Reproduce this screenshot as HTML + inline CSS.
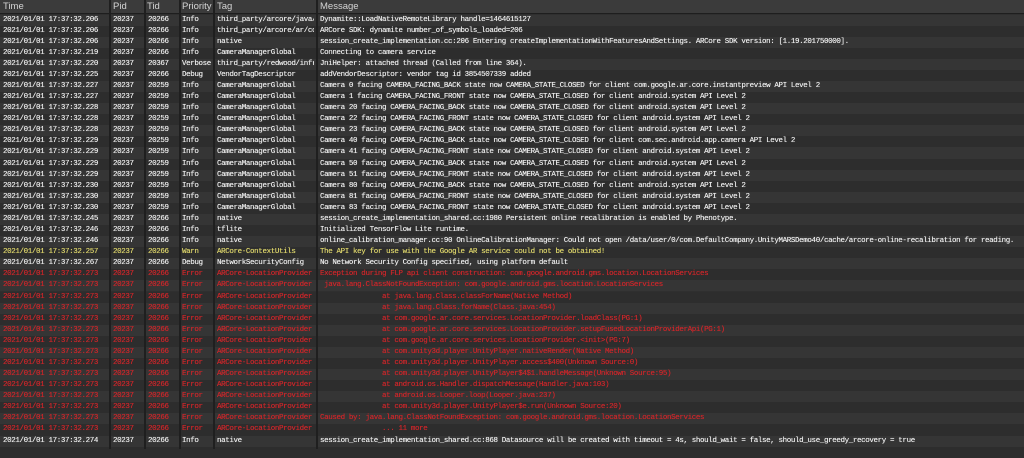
<!DOCTYPE html>
<html><head><meta charset="utf-8"><style>
html,body{margin:0;padding:0;background:#2f2f2f;width:1024px;height:449px;overflow:hidden}
.h{position:absolute;left:0;top:0;width:1024px;height:13px;background:#3b3b3b;border-bottom:1px solid #1e1e1e;font:9.5px "Liberation Sans",sans-serif;color:#d4d4d4}
.h span{position:absolute;top:1px}
.r{position:absolute;left:0;width:1024px;height:11.08px;font:7.5px/11px "Liberation Mono",monospace;letter-spacing:-0.37px;color:#ececec;white-space:pre;overflow:hidden;text-shadow:0 0 0.4px currentColor}
.r:nth-child(odd){background:#353535}
.r:nth-child(even){background:#2d2d2d}
.r span{position:absolute;top:0}
.w{color:#dcd46a}.e{color:#cc262a}
.d{position:absolute;top:0;width:2px;height:449px;background:#1f1f1f}
</style></head><body>
<div id="rows"></div>
<div class="h"><span style="left:3px">Time</span><span style="left:113px">Pid</span><span style="left:147px">Tid</span><span style="left:182px">Priority</span><span style="left:217px">Tag</span><span style="left:320px">Message</span></div>
<div class="d" style="left:109px"></div><div class="d" style="left:144px"></div><div class="d" style="left:179px"></div><div class="d" style="left:213px"></div><div class="d" style="left:316px"></div>
<script>
var R=[
["206","20266","Info","third_party/arcore/java/","Dynamite::LoadNativeRemoteLibrary handle=1464615127"],
["206","20266","Info","third_party/arcore/ar/co","ARCore SDK: dynamite number_of_symbols_loaded=206"],
["206","20266","Info","native","session_create_implementation.cc:206 Entering createImplementationWithFeaturesAndSettings. ARCore SDK version: [1.19.201750000]."],
["219","20266","Info","CameraManagerGlobal","Connecting to camera service"],
["220","20367","Verbose","third_party/redwood/infr","JniHelper: attached thread (Called from line 364)."],
["225","20266","Debug","VendorTagDescriptor","addVendorDescriptor: vendor tag id 3854507339 added"]];
var cams=[["227","0","BACK","com.google.ar.core.instantpreview"],["227","1","FRONT",""],["228","20","BACK",""],["228","22","FRONT",""],["228","23","BACK",""],["229","40","BACK","com.sec.android.app.camera"],["229","41","FRONT",""],["229","50","BACK",""],["229","51","FRONT",""],["230","80","BACK",""],["230","81","FRONT",""],["230","83","FRONT",""]];
cams.forEach(function(c){R.push([c[0],"20259","Info","CameraManagerGlobal","Camera "+c[1]+" facing CAMERA_FACING_"+c[2]+" state now CAMERA_STATE_CLOSED for client "+(c[3]||"android.system")+" API Level 2"])});
R.push(["245","20266","Info","native","session_create_implementation_shared.cc:1980 Persistent online recalibration is enabled by Phenotype."]);
R.push(["246","20266","Info","tflite","Initialized TensorFlow Lite runtime."]);
R.push(["246","20266","Info","native","online_calibration_manager.cc:90 OnlineCalibrationManager: Could not open /data/user/0/com.DefaultCompany.UnityMARSDemo40/cache/arcore-online-recalibration for reading."]);
R.push(["257","20266","Warn","ARCore-ContextUtils","The API key for use with the Google AR service could not be obtained!","w"]);
R.push(["267","20266","Debug","NetworkSecurityConfig","No Network Security Config specified, using platform default"]);
var E=["Exception during FLP api client construction: com.google.android.gms.location.LocationServices",
" java.lang.ClassNotFoundException: com.google.android.gms.location.LocationServices",
"               at java.lang.Class.classForName(Native Method)",
"               at java.lang.Class.forName(Class.java:454)",
"               at com.google.ar.core.services.LocationProvider.loadClass(PG:1)",
"               at com.google.ar.core.services.LocationProvider.setupFusedLocationProviderApi(PG:1)",
"               at com.google.ar.core.services.LocationProvider.<init>(PG:7)",
"               at com.unity3d.player.UnityPlayer.nativeRender(Native Method)",
"               at com.unity3d.player.UnityPlayer.access$400(Unknown Source:0)",
"               at com.unity3d.player.UnityPlayer$4$1.handleMessage(Unknown Source:95)",
"               at android.os.Handler.dispatchMessage(Handler.java:103)",
"               at android.os.Looper.loop(Looper.java:237)",
"               at com.unity3d.player.UnityPlayer$e.run(Unknown Source:20)",
"Caused by: java.lang.ClassNotFoundException: com.google.android.gms.location.LocationServices",
"               ... 11 more"];
E.forEach(function(m){R.push(["273","20266","Error","ARCore-LocationProvider",m,"e"])});
R.push(["274","20266","Info","native","session_create_implementation_shared.cc:868 Datasource will be created with timeout = 4s, should_wait = false, should_use_greedy_recovery = true"]);
var h="";
function esc(s){return s.replace(/&/g,"&amp;").replace(/</g,"&lt;")}
R.forEach(function(r,i){
h+='<div class="r '+(r[5]||"")+'" style="top:'+(14.5+i*11.08).toFixed(2)+'px"><span style="left:3px">2021/01/01 17:37:32.'+r[0]+'</span><span style="left:113px">20237</span><span style="left:148px">'+r[1]+'</span><span style="left:182px">'+r[2]+'</span><span style="left:217px;width:97px;overflow:hidden">'+esc(r[3])+'</span><span style="left:320px">'+esc(r[4])+'</span></div>';});
h+='<div class="r" style="top:'+(14.5+R.length*11.08).toFixed(2)+'px"></div>';
document.getElementById("rows").innerHTML=h;
</script>
</body></html>
